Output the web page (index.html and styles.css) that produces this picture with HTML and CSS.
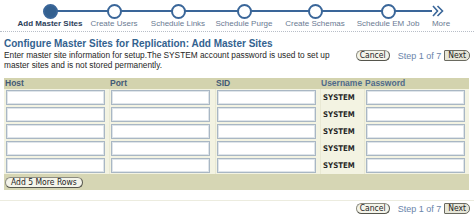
FILE: index.html
```html
<!DOCTYPE html>
<html>
<head>
<meta charset="utf-8">
<link rel="stylesheet" href="styles.css">
</head>
<body>
<div class="train">
  <div class="step s1"><div class="node"><span class="dot active"></span></div><div class="lbl cur">Add Master Sites</div></div>
  <div class="step s2"><div class="node"><span class="dot"></span></div><div class="lbl">Create Users</div></div>
  <div class="step s3"><div class="node"><span class="dot"></span></div><div class="lbl">Schedule Links</div></div>
  <div class="step s4"><div class="node"><span class="dot"></span></div><div class="lbl">Schedule Purge</div></div>
  <div class="step s5"><div class="node"><span class="dot"></span></div><div class="lbl">Create Schemas</div></div>
  <div class="step s6"><div class="node"><span class="dot"></span></div><div class="lbl">Schedule EM Job</div></div>
  <div class="step s7"><div class="node"><svg class="chev" width="12" height="12" viewBox="0 0 12 12"><polyline points="1,1 5.5,6 1,11" fill="none" stroke="#3a6699" stroke-width="1.6"/><polyline points="5.5,1 10.5,6 5.5,11" fill="none" stroke="#3a6699" stroke-width="1.6"/></svg></div><div class="lbl">More</div></div>
</div>

<h1 class="title">Configure Master Sites for Replication: Add Master Sites</h1>

<div class="intro">
  <p class="desc">Enter master site information for setup.The SYSTEM account password is used to set up master sites and is not stored permanently.</p>
  <div class="nav">
    <button class="btn">Cancel</button>
    <span class="stepof">Step 1 of 7</span>
    <button class="btn next">Next</button>
  </div>
</div>

<div class="grid">
  <div class="hd">Host</div><div class="hd">Port</div><div class="hd">SID</div><div class="hd hd2">Username</div><div class="hd hd2">Password</div>
  <div class="cell"><input class="inp"></div><div class="cell"><input class="inp"></div><div class="cell"><input class="inp"></div><div class="cell user">SYSTEM</div><div class="cell"><input class="inp" type="password"></div>
  <div class="cell"><input class="inp"></div><div class="cell"><input class="inp"></div><div class="cell"><input class="inp"></div><div class="cell user">SYSTEM</div><div class="cell"><input class="inp" type="password"></div>
  <div class="cell"><input class="inp"></div><div class="cell"><input class="inp"></div><div class="cell"><input class="inp"></div><div class="cell user">SYSTEM</div><div class="cell"><input class="inp" type="password"></div>
  <div class="cell"><input class="inp"></div><div class="cell"><input class="inp"></div><div class="cell"><input class="inp"></div><div class="cell user">SYSTEM</div><div class="cell"><input class="inp" type="password"></div>
  <div class="cell"><input class="inp"></div><div class="cell"><input class="inp"></div><div class="cell"><input class="inp"></div><div class="cell user">SYSTEM</div><div class="cell"><input class="inp" type="password"></div>
  <div class="foot"><button class="btn add">Add 5 More Rows</button></div>
</div>

<div class="bottom">
  <div class="nav">
    <button class="btn">Cancel</button>
    <span class="stepof">Step 1 of 7</span>
    <button class="btn next">Next</button>
  </div>
</div>
</body>
</html>
```

FILE: styles.css
```css
html, body {
  margin: 0;
  padding: 0;
  background: #ffffff;
}
body {
  width: 474px;
  height: 219px;
  overflow: hidden;
  font-family: "Liberation Sans", Arial, sans-serif;
  font-size: 8px;
  color: #2a2a2a;
}

/* train */
.train {
  display: flex;
  padding-left: 14px;
  height: 31px;
  border-bottom: 1px dotted #b8bec8;
}
.step {
  display: flex;
  flex-direction: column;
  align-items: center;
}
.s1 { width: 72px; }
.s2 { width: 56px; }
.s3 { width: 72px; }
.s4 { width: 60px; }
.s5 { width: 82px; }
.s6 { width: 64px; }
.s7 { width: 42px; }
.node {
  position: relative;
  width: 100%;
  height: 15px;
  margin-top: 4px;
  display: flex;
  justify-content: center;
  align-items: center;
}
.node::before {
  content: "";
  position: absolute;
  left: 0;
  right: 0;
  top: 6px;
  height: 2px;
  background: #3a6699;
}
.s1 .node::before { left: 50%; }
.s7 .node::before { right: 50%; }
.dot {
  position: relative;
  box-sizing: border-box;
  width: 15px;
  height: 15px;
  border-radius: 50%;
  border: 2px solid #3a6699;
  background: #ffffff;
}
.dot.active { background: #34608f; }
.chev {
  position: relative;
  background: #fff;
  margin-left: -6px;
  margin-top: -1px;
}
.lbl {
  white-space: nowrap;
  line-height: 10px;
  color: #6a7a92;
  font-size: 8px;
}
.lbl.cur {
  color: #2b3e5a;
  font-weight: bold;
}

/* title */
.title {
  margin: 5px 0 0 4px;
  font-size: 10px;
  line-height: 13px;
  font-weight: bold;
  color: #33628f;
}

/* intro */
.intro {
  display: flex;
  align-items: flex-start;
  padding: 0 4px 0 4px;
}
.desc {
  margin: 0;
  width: 340px;
  line-height: 10px;
  font-size: 8.3px;
  color: #262626;
}
.nav {
  margin-left: auto;
  display: flex;
  align-items: center;
  margin-top: 0;
}
.btn {
  font-family: "DejaVu Sans Condensed", "DejaVu Sans", sans-serif;
  font-stretch: condensed;
  font-size: 8.5px;
  line-height: 9px;
  height: 11px;
  padding: 0 3px;
  color: #1e1e1e;
  background: #f4f4ea;
  border: 1px solid #8c8c80;
  border-right-color: #55554c;
  border-bottom-color: #55554c;
  border-radius: 6px;
  margin: 0;
}
.stepof {
  color: #6a84aa;
  font-size: 9px;
  margin: 0 3px 0 8px;
}
.btn.next {
  border-radius: 1px 5px 5px 1px;
  background: #e6e6d8;
  border-color: #6a6a60;
  padding: 0 3px;
}

/* table */
.grid {
  display: grid;
  grid-template-columns: 105px 106px 105px 44px 105px;
  margin: 8px 0 0 4px;
  width: 465px;
  background: #f3f3e2;
}
.hd {
  background: #d3d3ae;
  font-weight: bold;
  font-size: 8.5px;
  line-height: 11px;
  height: 11px;
  padding-left: 1px;
  color: #435a76;
}
.hd2 { color: #4f6a8a; }
.cell {
  height: 17px;
  display: flex;
  align-items: center;
  padding-left: 1px;
  border-left: 1px solid #e9e9d4;
}
.cell:nth-child(5n+1) { border-left-color: transparent; }
.inp {
  box-sizing: border-box;
  width: 99px;
  height: 15px;
  margin: 0;
  padding: 0;
  border: 1px solid #a9b7c4;
  box-shadow: inset 0 0 0 1px #dfe5ea;
  background: #ffffff;
}
.user {
  font-family: "DejaVu Sans Condensed", "DejaVu Sans", sans-serif;
  font-stretch: condensed;
  font-weight: bold;
  font-size: 7.8px;
  color: #262626;
  padding-left: 2px;
}
.foot {
  grid-column: 1 / -1;
  background: #d6d6b4;
  height: 16px;
  display: flex;
  align-items: center;
  padding-left: 1px;
}
.btn.add {
  padding: 0 5px;
}

/* bottom */
.bottom {
  margin-top: 10px;
  border-top: 1px solid #ececdf;
  padding: 2px 4px 0 4px;
  display: flex;
}
```
